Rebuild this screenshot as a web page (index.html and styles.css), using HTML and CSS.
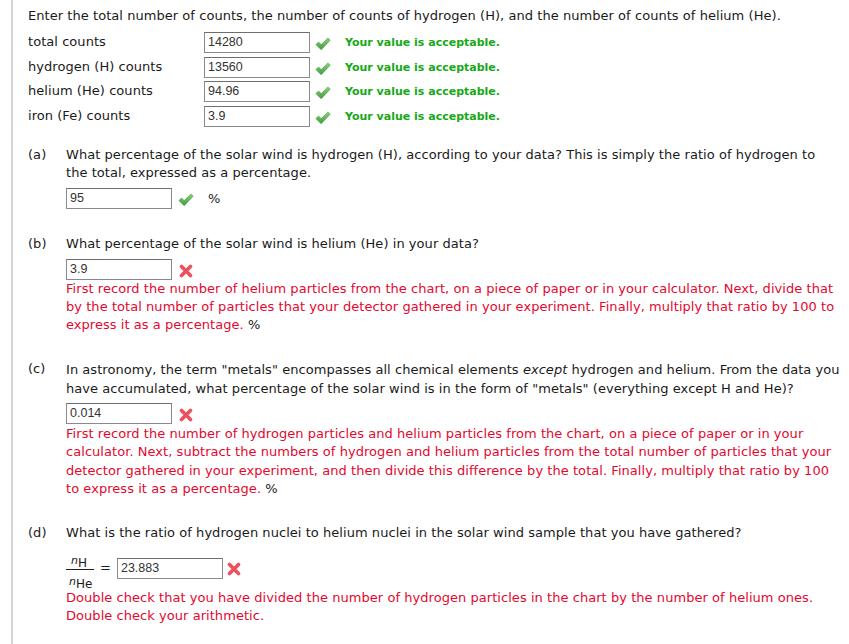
FILE: index.html
```html
<!DOCTYPE html>
<html>
<head>
<meta charset="utf-8">
<link rel="stylesheet" href="styles.css">
</head>
<body>
<svg width="0" height="0" class="defs">
  <defs>
    <linearGradient id="gck" x1="0" y1="0" x2="0" y2="1">
      <stop offset="0" stop-color="#8fd27f"/>
      <stop offset="1" stop-color="#3f9a3a"/>
    </linearGradient>
    <symbol id="check" viewBox="0 0 16 14">
      <path d="M0.8 7.6 L3.6 5 L6.2 7.6 L13 0.9 L15.2 3.2 L6.2 12.8 Z" fill="url(#gck)" stroke="#4c9c44" stroke-width="0.6" stroke-linejoin="round"/>
    </symbol>
    <symbol id="cross" viewBox="0 0 14 14">
      <path d="M2.5 2.5 L11.5 11.5 M11.5 2.5 L2.5 11.5" stroke="#f0505e" stroke-width="3.6" stroke-linecap="round"/>
    </symbol>
  </defs>
</svg>
<div class="page">
  <p class="intro">Enter the total number of counts, the number of counts of hydrogen (H), and the number of counts of helium (He).</p>
  <div class="counts">
    <span class="lbl">total counts</span><span class="field">14280</span><svg class="ok"><use href="#check"/></svg><span class="good">Your value is acceptable.</span>
    <span class="lbl">hydrogen (H) counts</span><span class="field">13560</span><svg class="ok"><use href="#check"/></svg><span class="good">Your value is acceptable.</span>
    <span class="lbl">helium (He) counts</span><span class="field">94.96</span><svg class="ok"><use href="#check"/></svg><span class="good">Your value is acceptable.</span>
    <span class="lbl">iron (Fe) counts</span><span class="field">3.9</span><svg class="ok"><use href="#check"/></svg><span class="good">Your value is acceptable.</span>
  </div>

  <div class="part part-a">
    <span class="tag">(a)</span>
    <div class="body">
      <p class="q">What percentage of the solar wind is hydrogen (H), according to your data? This is simply the ratio of hydrogen to<br>the total, expressed as a percentage.</p>
      <div class="ans"><span class="field">95</span><svg class="ok"><use href="#check"/></svg><span class="unit">%</span></div>
    </div>
  </div>

  <div class="part part-b">
    <span class="tag">(b)</span>
    <div class="body">
      <p class="q">What percentage of the solar wind is helium (He) in your data?</p>
      <div class="ans"><span class="field">3.9</span><svg class="bad"><use href="#cross"/></svg></div>
      <p class="fb">First record the number of helium particles from the chart, on a piece of paper or in your calculator. Next, divide that<br>by the total number of particles that your detector gathered in your experiment. Finally, multiply that ratio by 100 to<br>express it as a percentage. <span class="pct">%</span></p>
    </div>
  </div>

  <div class="part part-c">
    <span class="tag">(c)</span>
    <div class="body">
      <p class="q">In astronomy, the term "metals" encompasses all chemical elements <em>except</em> hydrogen and helium. From the data you<br>have accumulated, what percentage of the solar wind is in the form of "metals" (everything except H and He)?</p>
      <div class="ans"><span class="field">0.014</span><svg class="bad"><use href="#cross"/></svg></div>
      <p class="fb">First record the number of hydrogen particles and helium particles from the chart, on a piece of paper or in your<br>calculator. Next, subtract the numbers of hydrogen and helium particles from the total number of particles that your<br>detector gathered in your experiment, and then divide this difference by the total. Finally, multiply that ratio by 100<br>to express it as a percentage. <span class="pct">%</span></p>
    </div>
  </div>

  <div class="part part-d">
    <span class="tag">(d)</span>
    <div class="body">
      <p class="q">What is the ratio of hydrogen nuclei to helium nuclei in the solar wind sample that you have gathered?</p>
      <div class="ans ans-d">
        <span class="frac"><span class="num"><i>n</i><span class="sb">H</span></span><span class="den"><i>n</i><span class="sb">He</span></span></span>
        <span class="eq">=</span>
        <span class="field">23.883</span><svg class="bad"><use href="#cross"/></svg>
      </div>
      <p class="fb">Double check that you have divided the number of hydrogen particles in the chart by the number of helium ones.<br>Double check your arithmetic.</p>
    </div>
  </div>
</div>
</body>
</html>
```
FILE: styles.css
```css
html, body {
  margin: 0;
  padding: 0;
  background: #fff;
}
.defs {
  position: absolute;
  width: 0;
  height: 0;
}
.page {
  margin-left: 11px;
  border-left: 2px solid #d4d4d4;
  padding: 7px 0 40px 15px;
  min-height: 600px;
  font-family: "DejaVu Sans", Verdana, sans-serif;
  font-size: 13px;
  line-height: 18px;
  letter-spacing: 0.05px;
  color: #1a1a1a;
  white-space: nowrap;
}
p { margin: 0; }
.intro { margin: 0; }
.counts {
  display: grid;
  grid-template-columns: 176px 106px 35px auto;
  grid-template-rows: 25px 24px 25px 24px;
  margin-top: 7px;
  align-items: start;
}
.lbl { line-height: 20px; }
.field {
  box-sizing: border-box;
  display: inline-block;
  width: 106px;
  height: 21px;
  border: 1px solid #8a8a8a;
  border-top-color: #6e6e6e;
  padding: 0 3px;
  font-family: "Liberation Sans", Arial, sans-serif;
  font-size: 12.5px;
  line-height: 19px;
  letter-spacing: 0;
  color: #333;
  background: #fff;
}
.ok {
  width: 16px;
  height: 14px;
  margin: 5px 0 0 5px;
}
.good {
  color: #18a818;
  font-weight: bold;
  font-size: 11px;
  line-height: 21px;
  letter-spacing: 0;
}
.part {
  display: flex;
  margin-top: 26px;
}
.part-a { margin-top: 16px; }
.tag { width: 38px; flex: none; }
.ans {
  display: flex;
  align-items: center;
  margin-top: 6px;
  height: 21px;
}
.ans .ok { margin: 3px 0 0 6px; }
.unit { margin-left: 14px; }
.bad {
  width: 14px;
  height: 14px;
  margin: 3px 0 0 7px;
}
.fb {
  color: #e3082f;
  margin-top: 0;
}
.pct { color: #1a1a1a; }
.part-c .q { line-height: 19px; }
.part-c .ans { margin-top: 5px; margin-bottom: 1px; }
.part-c .fb { line-height: 18.4px; }
.part-d { margin-top: 25px; }
.ans-d {
  margin-top: 16px;
  height: 31px;
  align-items: flex-start;
}
.frac {
  display: inline-flex;
  flex-direction: column;
  width: 28px;
  font-size: 12px;
  line-height: 13px;
  margin-top: -4px;
}
.frac i {
  font-size: 11px;
  font-style: italic;
  font-family: "DejaVu Sans", Verdana, sans-serif;
}
.num {
  padding-left: 5px;
  border-bottom: 1px solid #222;
  height: 15px;
}
.den {
  padding-left: 3px;
  padding-top: 5px;
}
.sb {
  position: relative;
  top: 3px;
  font-size: 12px;
}
.eq {
  margin: 0 6px 0 6px;
  line-height: 20px;
}
.ans-d .bad { margin-top: 4px; margin-left: 4px; }
.part-d .fb { margin-top: 0; }
```
